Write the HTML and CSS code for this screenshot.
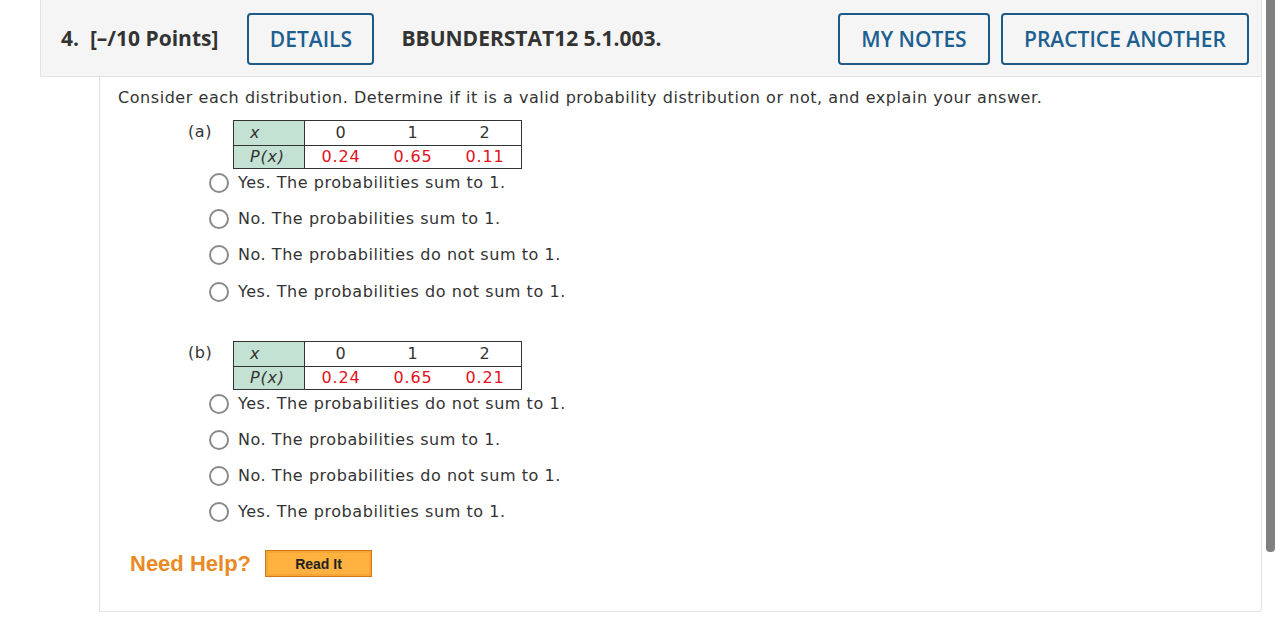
FILE: index.html
```html
<!DOCTYPE html>
<html>
<head>
<meta charset="utf-8">
<link rel="stylesheet" href="styles.css">
</head>
<body>
<div class="page">
  <div class="header">
    <span class="qnum">4.&nbsp; [–/10 Points]</span>
    <button class="btn details">DETAILS</button>
    <span class="code">BBUNDERSTAT12 5.1.003.</span>
    <span class="spacer"></span>
    <button class="btn notes">MY NOTES</button>
    <button class="btn practice">PRACTICE ANOTHER</button>
  </div>
  <div class="content">
    <p class="prompt">Consider each distribution. Determine if it is a valid probability distribution or not, and explain your answer.</p>

    <div class="part">
      <div class="part-head">
        <span class="label">(a)</span>
        <table class="dist">
          <tr><td class="hd">x</td><td>0</td><td>1</td><td>2</td></tr>
          <tr><td class="hd">P(x)</td><td class="v">0.24</td><td class="v">0.65</td><td class="v">0.11</td></tr>
        </table>
      </div>
      <ul class="options">
        <li><span class="radio"></span>Yes. The probabilities sum to 1.</li>
        <li><span class="radio"></span>No. The probabilities sum to 1.</li>
        <li><span class="radio"></span>No. The probabilities do not sum to 1.</li>
        <li><span class="radio"></span>Yes. The probabilities do not sum to 1.</li>
      </ul>
    </div>

    <div class="part partb">
      <div class="part-head">
        <span class="label">(b)</span>
        <table class="dist">
          <tr><td class="hd">x</td><td>0</td><td>1</td><td>2</td></tr>
          <tr><td class="hd">P(x)</td><td class="v">0.24</td><td class="v">0.65</td><td class="v">0.21</td></tr>
        </table>
      </div>
      <ul class="options">
        <li><span class="radio"></span>Yes. The probabilities do not sum to 1.</li>
        <li><span class="radio"></span>No. The probabilities sum to 1.</li>
        <li><span class="radio"></span>No. The probabilities do not sum to 1.</li>
        <li><span class="radio"></span>Yes. The probabilities sum to 1.</li>
      </ul>
    </div>

    <div class="help">
      <span class="need">Need Help?</span>
      <button class="readit">Read It</button>
    </div>
  </div>
</div>
<div class="scrollbar"></div>
</body>
</html>
```

FILE: styles.css
```css
html, body {
  margin: 0;
  padding: 0;
  background: #fff;
}
body {
  width: 1284px;
  height: 630px;
  overflow: hidden;
  position: relative;
  font-family: "DejaVu Sans", Verdana, sans-serif;
  color: #333;
}
.page {
  margin-left: 40px;
  width: 1222px;
}
.header {
  box-sizing: border-box;
  height: 77px;
  background: #f5f5f5;
  border: 1px solid #e2e2e2;
  border-top: none;
  display: flex;
  align-items: center;
  padding: 0 12px 0 20px;
  font-family: "Open Sans", sans-serif;
}
.qnum {
  font-size: 21px;
  font-weight: 700;
  color: #333;
  margin-right: 29px;
}
.btn {
  box-sizing: border-box;
  height: 52px;
  margin-top: 1px;
  border: 2px solid #1d5a87;
  border-radius: 4px;
  color: #1d5f91;
  font-family: "Open Sans", sans-serif;
  font-size: 21px;
  font-weight: 600;
  padding: 0;
  background: transparent;
}
.details { width: 127px; }
.code {
  font-size: 21px;
  font-weight: 700;
  color: #333;
  margin-left: 27px;
}
.spacer { flex: 1; }
.notes { width: 152px; margin-right: 11px; }
.practice { width: 248px; }
.content {
  box-sizing: border-box;
  margin-left: 59px;
  height: 535px;
  border: 1px solid #e2e2e2;
  border-top: none;
  border-radius: 0 0 4px 0;
  padding: 9px 0 0 18px;
  font-size: 16px;
  letter-spacing: 0.55px;
}
.prompt {
  margin: 0;
  line-height: 24px;
}
.part {
  margin-left: 70px;
}
.part-head {
  display: flex;
  align-items: flex-start;
  margin-top: 10px;
}
.partb { margin-top: 39px; }
.label {
  width: 45px;
  line-height: 24px;
  margin-top: 0;
}
.dist {
  border-collapse: collapse;
  border: 1px solid #333;
  font-size: 16px;
  letter-spacing: 0.8px;
}
.dist td {
  width: 72px;
  padding: 0;
  text-align: center;
  height: 22px;
  line-height: 20px;
}
.dist tr:first-child td {
  height: 24px;
  border-bottom: 1px solid #333;
}
.dist td.hd {
  width: 54px;
  background: #c4e2d3;
  border-right: 1px solid #333;
  text-align: left;
  padding-left: 16px;
  font-style: italic;
}
.dist td.v { color: #e3101c; }
.options {
  list-style: none;
  margin: 0;
  padding: 0 0 0 21px;
}
.options li {
  display: flex;
  align-items: center;
  height: 20px;
  margin-top: 16.2px;
  line-height: 20px;
}
.options li:first-child { margin-top: 4px; }
.radio {
  box-sizing: border-box;
  width: 20px;
  height: 20px;
  border: 2px solid #8a8a8a;
  border-radius: 50%;
  margin-right: 9px;
  flex: none;
}
.help {
  display: flex;
  align-items: center;
  margin: 28px 0 0 12px;
  letter-spacing: 0;
}
.need {
  font-family: "Liberation Sans", Arial, sans-serif;
  font-weight: 700;
  font-size: 22px;
  color: #ea8a24;
  margin-right: 14px;
}
.readit {
  box-sizing: border-box;
  width: 107px;
  height: 27px;
  background: #ffb240;
  border: 1px solid #d07818;
  box-shadow: inset 0 0 0 2px #f7a535;
  font-family: "Liberation Sans", Arial, sans-serif;
  font-weight: 700;
  font-size: 14px;
  color: #222;
  padding: 0;
}
.scrollbar {
  position: absolute;
  left: 1266px;
  top: 0;
  width: 9px;
  height: 552px;
  background: #808080;
  border-radius: 0 0 4px 4px;
}
```
